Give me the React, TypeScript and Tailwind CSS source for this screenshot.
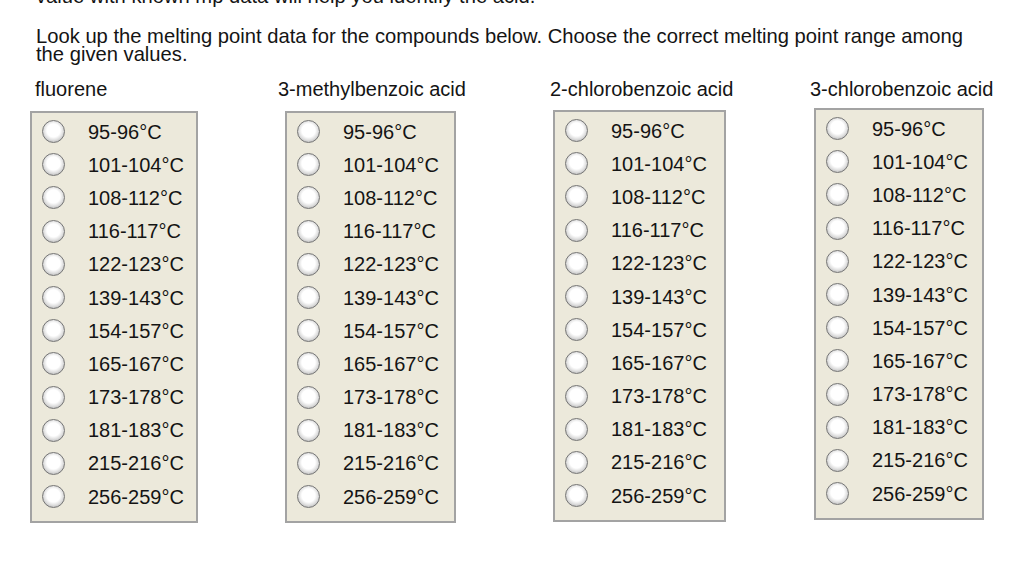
const RANGES = [
  '95-96°C',
  '101-104°C',
  '108-112°C',
  '116-117°C',
  '122-123°C',
  '139-143°C',
  '154-157°C',
  '165-167°C',
  '173-178°C',
  '181-183°C',
  '215-216°C',
  '256-259°C',
]

type Column = { name: string; col: string; head: string; box: string }

const COLUMNS: Column[] = [
  { name: 'fluorene', col: 'w-[248px]', head: 'pl-[5px]', box: 'ml-0 mt-[11px] w-[168px]' },
  { name: '3-methylbenzoic acid', col: 'w-[272px]', head: 'pl-0', box: 'ml-[7px] mt-[11px] w-[171px]' },
  { name: '2-chlorobenzoic acid', col: 'w-[260px]', head: 'pl-0', box: 'ml-[3px] mt-[10px] w-[173px]' },
  { name: '3-chlorobenzoic acid', col: 'w-[210px]', head: 'pl-0', box: 'ml-[4px] mt-[8px] w-[170px]' },
]

function Radio() {
  return (
    <span className="block h-[23px] w-[23px] shrink-0 rounded-full border-[1.5px] border-[#767676] bg-[radial-gradient(circle_at_50%_45%,#ffffff_42%,#e2e2e2_60%,#949494_100%)]" />
  )
}

export default function App() {
  return (
    <div className="h-[580px] w-[1024px] overflow-hidden bg-white font-['Liberation_Sans',Arial,sans-serif] text-[20px] text-[#141414]">
      <div className="w-[990px] pl-[36px] text-[20.2px]">
        <p className="-mt-[13px] leading-[18px]">value with known mp data will help you identify the acid.</p>
        <p className="mt-[22px] leading-[18px]">
          Look up the melting point data for the compounds below. Choose the correct melting point range among
          the given values.
        </p>
      </div>

      <div className="mt-[15px] flex pl-[30px]">
        {COLUMNS.map((c) => (
          <div key={c.name} className={`${c.col} shrink-0`}>
            <div className={`${c.head} leading-[22px]`}>{c.name}</div>
            <div className={`${c.box} border-2 border-[#a3a3a3] bg-[#ece9db] pb-[8px] pt-[2px]`}>
              {RANGES.map((r) => (
                <label key={r} className="flex h-[33.2px] items-center pl-[10px]">
                  <Radio />
                  <span className="ml-[23px] leading-none">{r}</span>
                </label>
              ))}
            </div>
          </div>
        ))}
      </div>
    </div>
  )
}
